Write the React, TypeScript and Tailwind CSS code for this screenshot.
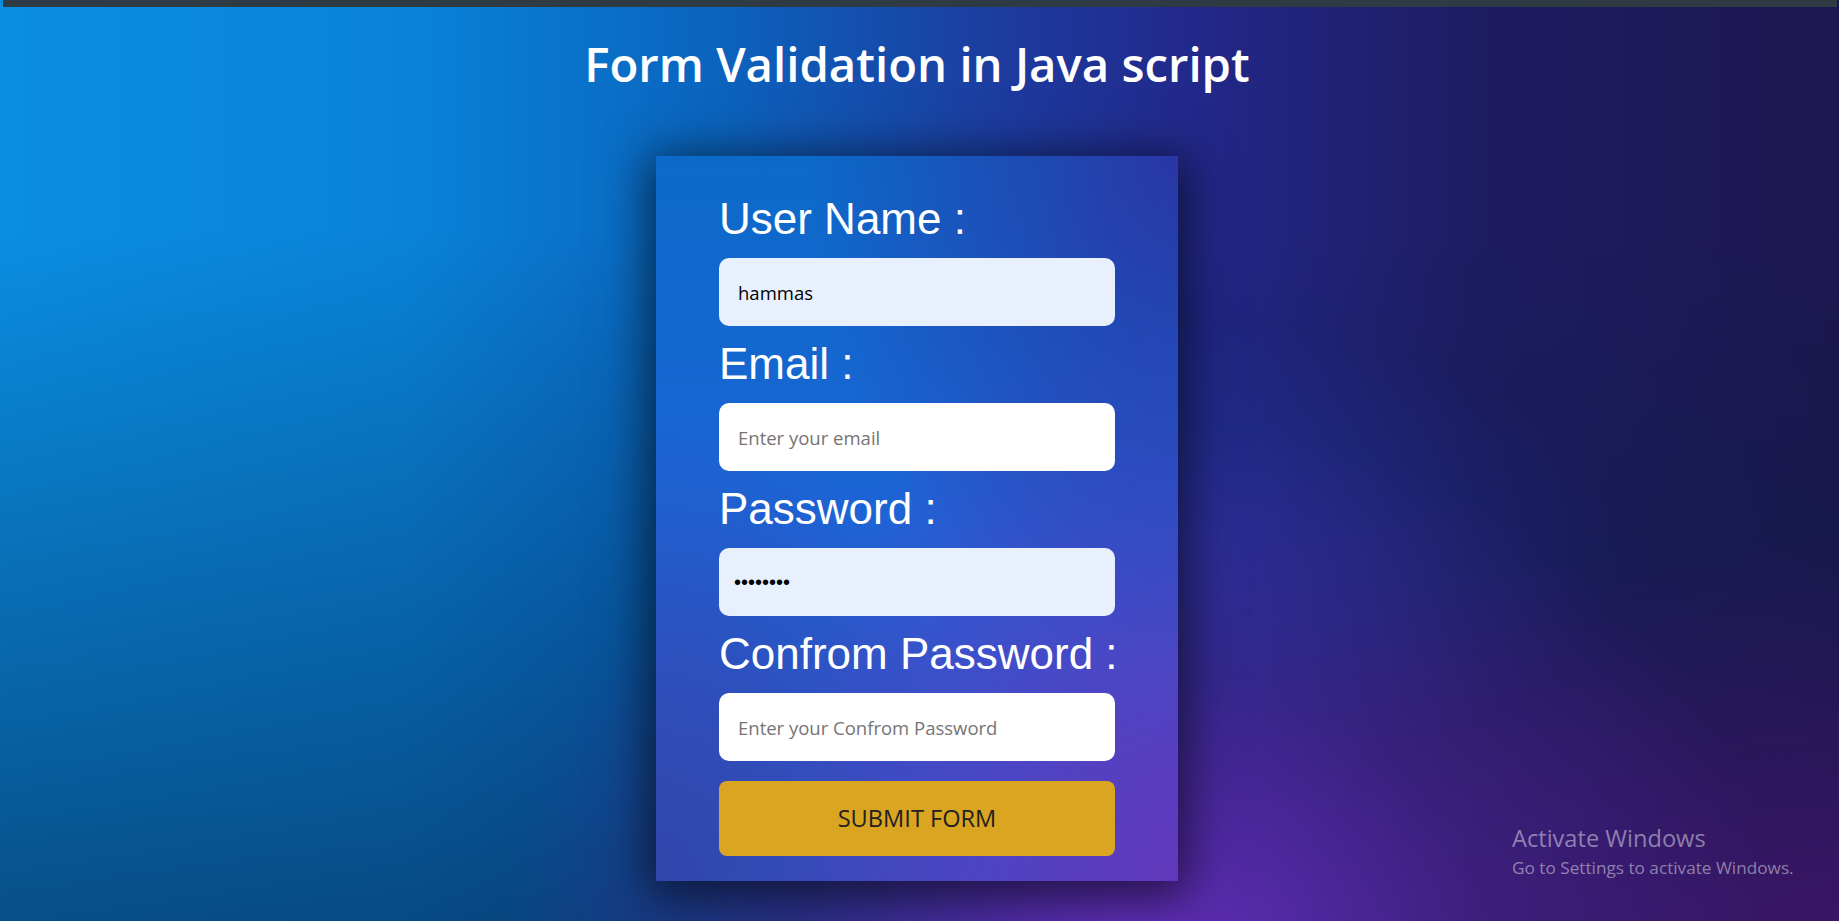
import React from 'react'

type Field = {
  label: string
  type: string
  placeholder: string
  value?: string
}

const fields: Field[] = [
  { label: 'User Name :', type: 'text', placeholder: 'Enter your name', value: 'hammas' },
  { label: 'Email :', type: 'email', placeholder: 'Enter your email' },
  { label: 'Password :', type: 'password', placeholder: 'Enter your password', value: 'hammas12' },
  { label: 'Confrom Password :', type: 'password', placeholder: 'Enter your Confrom Password' },
]

function FormField({ field }: { field: Field }) {
  const filled = field.value !== undefined
  const dots = filled && field.type === 'password'

  return (
    <div className="flex flex-col">
      <label className="mb-[15px] whitespace-nowrap font-['Liberation_Sans',Arial,sans-serif] text-[44px] leading-[49px] text-white">
        {field.label}
      </label>
      <input
        readOnly
        type={field.type}
        value={field.value ?? ''}
        placeholder={field.placeholder}
        className={
          'mb-[13px] h-[68px] w-full rounded-[10px] px-[19px] text-black outline-none placeholder:text-[#757575] ' +
          (filled ? 'bg-[#e8f0fe] ' : 'bg-white ') +
          (dots
            ? "pl-[15px] font-['Liberation_Sans',Arial,sans-serif] text-[20px]"
            : "font-['Open_Sans',sans-serif] text-[18.5px]")
        }
      />
    </div>
  )
}

function ActivateWindows() {
  return (
    <div className="pointer-events-none absolute left-[1512px] top-[822px] font-['Open_Sans',sans-serif] text-white/45">
      <div className="text-[23.6px] leading-[32px]">Activate Windows</div>
      <div className="mt-[2px] text-[17.2px] leading-[24px]">
        Go to Settings to activate Windows.
      </div>
    </div>
  )
}

function App() {
  return (
    <div className="relative flex h-screen w-full flex-col items-center overflow-hidden bg-[image:radial-gradient(ellipse_at_62%_105%,rgba(112,48,200,0.9)_0%,rgba(90,40,170,0.4)_22%,transparent_40%),radial-gradient(ellipse_at_100%_100%,rgba(70,20,110,0.8)_0%,transparent_30%),radial-gradient(ellipse_at_62%_60%,rgba(40,60,180,0.45)_0%,transparent_30%),linear-gradient(to_bottom,transparent_25%,rgba(4,28,64,0.55)_100%),linear-gradient(to_right,#0a8ee2_0%,#0983d8_22%,#0a66c0_38%,#1d3a9e_55%,#22288a_65%,#1e1c62_80%,#1d1750_100%)] pr-[5px]">
      <div className="-mr-[5px] h-[7px] w-full shrink-0 bg-[#2e3b45]" />

      <h1 className="mt-[25px] font-['Open_Sans',sans-serif] text-[47.3px] font-semibold leading-[64px] text-white">
        Form Validation in Java script
      </h1>

      <form
        onSubmit={(e) => e.preventDefault()}
        className="mt-[60px] flex w-[522px] flex-col bg-[image:radial-gradient(ellipse_at_100%_0%,#2a36a6_0%,transparent_50%),radial-gradient(ellipse_at_100%_100%,#6238bc_0%,transparent_55%),radial-gradient(ellipse_at_0%_100%,#3046ac_0%,transparent_45%),linear-gradient(to_bottom,#0b6ac8_0%,#1d64d6_50%,#3a50c8_100%)] px-[63px] pb-[25px] pt-[38px] shadow-[0_8px_45px_8px_rgba(0,0,0,0.6)]"
      >
        {fields.map((field) => (
          <FormField key={field.label} field={field} />
        ))}
        <button
          type="submit"
          className="mt-[7px] h-[75px] w-full rounded-[8px] bg-[#daa520] font-['Open_Sans',sans-serif] text-[23.6px] text-[#222]"
        >
          SUBMIT FORM
        </button>
      </form>

      <ActivateWindows />
    </div>
  )
}

export default App
